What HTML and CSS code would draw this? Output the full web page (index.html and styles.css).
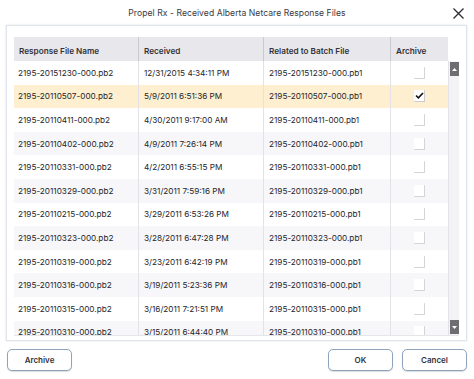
FILE: index.html
```html
<!DOCTYPE html>
<html>
<head>
<meta charset="utf-8">
<link rel="stylesheet" href="styles.css">
</head>
<body>
<div class="dialog">
  <div class="titlebar">
    <span class="title">Propel Rx - Received Alberta Netcare Response Files</span>
    <svg class="close" width="11" height="11" viewBox="0 0 11 11"><path d="M0.5 0.5 L10.5 10.5 M10.5 0.5 L0.5 10.5" stroke="#2b2b33" stroke-width="1.3"/></svg>
  </div>
  <div class="panel">
    <div class="grid">
      <div class="head">
        <div class="th">Response File Name</div>
        <div class="th">Received</div>
        <div class="th">Related to Batch File</div>
        <div class="th">Archive</div>
      </div>
      <div class="scrollwrap">
        <div class="rows">
          <div class="row"><div class="td">2195-20151230-000.pb2</div><div class="td">12/31/2015 4:34:11 PM</div><div class="td">2195-20151230-000.pb1</div><div class="td cb"><span class="box"></span></div></div>
          <div class="row sel"><div class="td">2195-20110507-000.pb2</div><div class="td">5/9/2011 6:51:36 PM</div><div class="td">2195-20110507-000.pb1</div><div class="td cb"><span class="box checked"><svg width="9" height="7" viewBox="0 0 9 7"><path d="M1 3.5 L3.4 5.8 L8 1" stroke="#111" stroke-width="1.6" fill="none"/></svg></span></div></div>
          <div class="row"><div class="td">2195-20110411-000.pb2</div><div class="td">4/30/2011 9:17:00 AM</div><div class="td">2195-20110411-000.pb1</div><div class="td cb"><span class="box"></span></div></div>
          <div class="row alt"><div class="td">2195-20110402-000.pb2</div><div class="td">4/9/2011 7:26:14 PM</div><div class="td">2195-20110402-000.pb1</div><div class="td cb"><span class="box"></span></div></div>
          <div class="row"><div class="td">2195-20110331-000.pb2</div><div class="td">4/2/2011 6:55:15 PM</div><div class="td">2195-20110331-000.pb1</div><div class="td cb"><span class="box"></span></div></div>
          <div class="row alt"><div class="td">2195-20110329-000.pb2</div><div class="td">3/31/2011 7:59:16 PM</div><div class="td">2195-20110329-000.pb1</div><div class="td cb"><span class="box"></span></div></div>
          <div class="row"><div class="td">2195-20110215-000.pb2</div><div class="td">3/29/2011 6:53:26 PM</div><div class="td">2195-20110215-000.pb1</div><div class="td cb"><span class="box"></span></div></div>
          <div class="row alt"><div class="td">2195-20110323-000.pb2</div><div class="td">3/28/2011 6:47:28 PM</div><div class="td">2195-20110323-000.pb1</div><div class="td cb"><span class="box"></span></div></div>
          <div class="row"><div class="td">2195-20110319-000.pb2</div><div class="td">3/23/2011 6:42:19 PM</div><div class="td">2195-20110319-000.pb1</div><div class="td cb"><span class="box"></span></div></div>
          <div class="row alt"><div class="td">2195-20110316-000.pb2</div><div class="td">3/19/2011 5:23:36 PM</div><div class="td">2195-20110316-000.pb1</div><div class="td cb"><span class="box"></span></div></div>
          <div class="row"><div class="td">2195-20110315-000.pb2</div><div class="td">3/16/2011 7:21:51 PM</div><div class="td">2195-20110315-000.pb1</div><div class="td cb"><span class="box"></span></div></div>
          <div class="row alt"><div class="td">2195-20110310-000.pb2</div><div class="td">3/15/2011 6:44:40 PM</div><div class="td">2195-20110310-000.pb1</div><div class="td cb"><span class="box"></span></div></div>
        </div>
        <div class="scrollbar">
          <div class="sbtn"><svg width="5" height="3" viewBox="0 0 5 3"><path d="M0 3 L2.5 0 L5 3 Z" fill="#fff"/></svg></div>
          <div class="track"></div>
          <div class="sbtn"><svg width="5" height="3" viewBox="0 0 5 3"><path d="M0 0 L2.5 3 L5 0 Z" fill="#fff"/></svg></div>
        </div>
      </div>
    </div>
  </div>
  <div class="footer">
    <button class="btn">Archive</button>
    <div class="right">
      <button class="btn">OK</button>
      <button class="btn">Cancel</button>
    </div>
  </div>
</div>
</body>
</html>
```
FILE: styles.css
```css
html, body {
  margin: 0;
  padding: 0;
  background: #ffffff;
}
body {
  font-family: Inter, "Noto Sans", sans-serif;
  color: #2a2a30;
  width: 474px;
  height: 379px;
  overflow: hidden;
}
.dialog {
  display: flex;
  flex-direction: column;
  height: 379px;
}
.titlebar {
  height: 25px;
  position: relative;
  display: flex;
  align-items: center;
  justify-content: center;
}
.title {
  font-size: 8.6px;
  color: #3a3a42;
  letter-spacing: 0.05px;
}
.close {
  position: absolute;
  right: 10px;
  top: 8px;
}
.panel {
  margin: 0 7px 0 6px;
  height: 316px;
  box-sizing: border-box;
  border: 1px solid #e1e4ea;
  box-shadow: 0 0 2px rgba(120,130,150,0.25);
  padding: 11px 7px 4px 7px;
}
.grid {
  display: flex;
  flex-direction: column;
  height: 100%;
}
.head {
  display: grid;
  grid-template-columns: 124px 125px 127px 58px;
  height: 24px;
  margin-right: 11px;
  background: #e8e8ec;
}
.th {
  font-size: 8.2px;
  font-weight: 600;
  color: #33333b;
  display: flex;
  align-items: center;
  padding: 4px 0 0 5px;
  border-left: 1px solid #c9c9cf;
}
.th:first-child { border-left: none; }
.scrollwrap {
  flex: 1;
  display: flex;
  overflow: hidden;
  border-bottom: 1px solid #e4e6ea;
}
.rows {
  width: 434px;
  display: grid;
  grid-auto-rows: 23.6px;
  align-content: start;
}
.row {
  display: grid;
  grid-template-columns: 124px 125px 127px 58px;
  background: #ffffff;
}
.row.alt { background: #f7f7f9; }
.row.sel { background: #fdefcf; }
.td {
  font-size: 8.2px;
  color: #25252b;
  display: flex;
  align-items: center;
  padding-left: 5px;
  border-left: 1px solid #e2e2e7;
  white-space: nowrap;
}
.td:first-child { border-left: none; padding-left: 4px; }
.td.cb {
  justify-content: center;
  padding-left: 0;
}
.box {
  width: 11px;
  height: 12px;
  background: #ffffff;
  border-right: 1px solid #d3d3d8;
  border-bottom: 1px solid #d3d3d8;
  border-radius: 1px;
  display: flex;
  align-items: center;
  justify-content: center;
  box-sizing: border-box;
}
.box.checked {
  border-color: #c9c9ce;
}
.scrollbar {
  width: 11px;
  display: flex;
  flex-direction: column;
  background: #f3f3f5;
  border-left: 1px solid #e3e3e7;
  box-sizing: border-box;
  padding: 1px 0 1px 1px;
}
.sbtn {
  height: 14px;
  background: #6e6e72;
  display: flex;
  align-items: center;
  justify-content: center;
}
.track { flex: 1; }
.footer {
  display: flex;
  justify-content: space-between;
  padding: 8px 7px 0 7px;
}
.right {
  display: flex;
  gap: 9px;
}
.btn {
  width: 65px;
  height: 22px;
  border: 1px solid #8fa4bb;
  border-radius: 5px;
  background: #ffffff;
  box-shadow: 0 1px 1px rgba(100,110,130,0.25);
  font-family: Inter, "Noto Sans", sans-serif;
  font-size: 8px;
  font-weight: 600;
  color: #33333b;
  padding: 0;
}
```
